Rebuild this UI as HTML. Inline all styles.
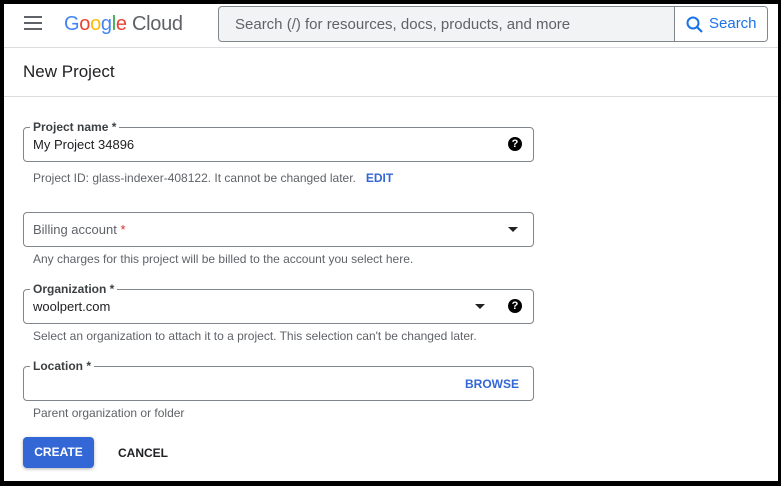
<!DOCTYPE html>
<html><head><meta charset="utf-8"><style>
*{box-sizing:border-box;margin:0;padding:0}
body{width:781px;height:486px;background:#000;font-family:"Liberation Sans",sans-serif;position:relative;overflow:hidden}
#w{position:absolute;left:4px;top:4px;width:774px;height:477px;background:#fff}
.a{position:absolute}
.hl{position:absolute;left:4px;width:774px;height:1px;background:#dadce0}
.f{position:absolute;left:23px;width:511px;height:35px;border:1px solid #80868b;border-radius:4px}
.lab{position:absolute;top:-8px;left:6px;background:#fff;padding:0 3px;font-size:12px;font-weight:bold;color:#3c4043;line-height:14px}
.val{position:absolute;left:9px;top:9px;font-size:13px;color:#202124}
.hint{position:absolute;left:33px;font-size:12px;color:#5f6368}
.q{position:absolute;width:14px;height:14px;border-radius:50%;background:#000;color:#fff;font-size:11px;font-weight:bold;text-align:center;line-height:14px}
.tri{position:absolute;width:0;height:0;border-left:5px solid transparent;border-right:5px solid transparent;border-top:5px solid #202124}
</style></head><body>
<div id="w"></div>
<div class="a" style="left:24px;top:16px;width:18px;height:2px;background:#5f6368;box-shadow:0 6px 0 #5f6368,0 12px 0 #5f6368"></div>
<div class="a" style="left:64px;top:13px;font-size:20px;letter-spacing:-0.3px"><span style="color:#4285f4">G</span><span style="color:#ea4335">o</span><span style="color:#fbbc05">o</span><span style="color:#4285f4">g</span><span style="color:#34a853">l</span><span style="color:#ea4335">e</span> <span style="color:#5f6368">Cloud</span></div>
<div class="a" style="left:218px;top:6px;width:550px;height:36px;border:1px solid #80868b;border-radius:4px;background:#f1f3f4;overflow:hidden">
<div class="a" style="left:16px;top:9px;font-size:15px;color:#5f6368">Search (/) for resources, docs, products, and more</div>
<div class="a" style="left:455px;top:0;width:95px;height:34px;background:#fff;border-left:1px solid #80868b">
<svg class="a" style="left:10px;top:8px" width="20" height="20" viewBox="0 0 20 20"><circle cx="8" cy="8" r="5.5" fill="none" stroke="#1a73e8" stroke-width="2"/><path d="M12 12l5 5" stroke="#1a73e8" stroke-width="2.2"/></svg>
<div class="a" style="left:34px;top:8px;font-size:15px;color:#1a73e8">Search</div></div></div>
<div class="hl" style="top:47px"></div>
<div class="a" style="left:23px;top:62px;font-size:17px;color:#202124">New Project</div>
<div class="hl" style="top:96px"></div>

<div class="f" style="top:127px"><div class="lab">Project name *</div><div class="val">My Project 34896</div><div class="q" style="left:484px;top:9px">?</div></div>
<div class="hint" style="top:171px">Project ID: glass-indexer-408122. It cannot be changed later. &nbsp;&nbsp;<b style="color:#3367d6;font-weight:bold">EDIT</b></div>

<div class="f" style="top:212px"><div class="val" style="color:#5f6368">Billing account <span style="color:#d93025">*</span></div><div class="tri" style="left:484px;top:14px"></div></div>
<div class="hint" style="top:252px">Any charges for this project will be billed to the account you select here.</div>

<div class="f" style="top:289px"><div class="lab">Organization *</div><div class="val">woolpert.com</div><div class="tri" style="left:451px;top:14px"></div><div class="q" style="left:484px;top:9px">?</div></div>
<div class="hint" style="top:329px">Select an organization to attach it to a project. This selection can't be changed later.</div>

<div class="f" style="top:366px"><div class="lab">Location *</div><div class="a" style="right:14px;top:10px;font-size:12px;font-weight:bold;color:#3367d6">BROWSE</div></div>
<div class="hint" style="top:406px">Parent organization or folder</div>

<div class="a" style="left:23px;top:437px;width:71px;height:31px;background:#3367d6;border-radius:4px;box-shadow:0 1px 3px rgba(0,0,0,.3);color:#fff;font-size:12px;font-weight:bold;text-align:center;line-height:31px">CREATE</div>
<div class="a" style="left:118px;top:446px;font-size:12px;font-weight:bold;color:#202124">CANCEL</div>
</body></html>
